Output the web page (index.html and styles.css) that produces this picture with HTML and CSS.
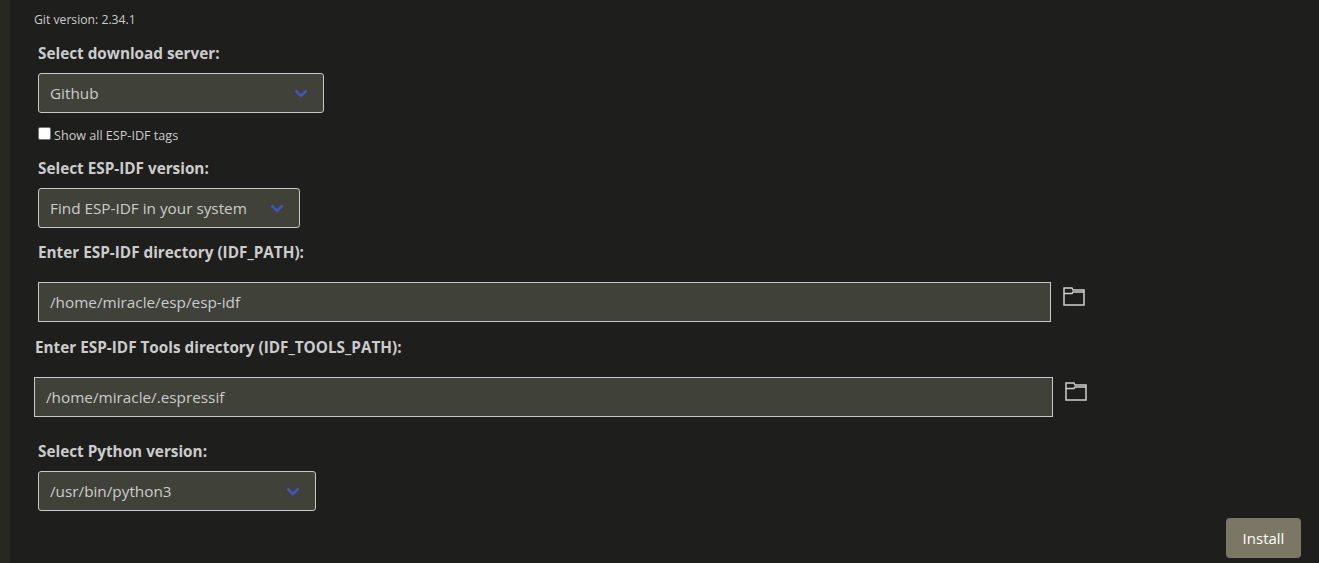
FILE: index.html
```html
<!DOCTYPE html>
<html lang="en">
<head>
  <meta charset="UTF-8" />
  <title>ESP-IDF Setup</title>
  <link rel="stylesheet" href="styles.css">
</head>
<body>
  <div class="strip"></div>
  <div class="container">
    <p class="git-version">Git version: 2.34.1</p>

    <label class="field-label label-server">Select download server:</label>
    <div class="select select-server">
      <span>Github</span>
      <svg class="chevron" viewBox="0 0 14 9"><path d="M1.500 1.500 7 7l5.500-5.500"/></svg>
    </div>

    <div class="check-row">
      <span class="check-box"></span>
      <span class="check-text">Show all ESP-IDF tags</span>
    </div>

    <label class="field-label label-version">Select ESP-IDF version:</label>
    <div class="select select-version">
      <span>Find ESP-IDF in your system</span>
      <svg class="chevron" viewBox="0 0 14 9"><path d="M1.500 1.500 7 7l5.500-5.500"/></svg>
    </div>

    <label class="field-label label-path">Enter ESP-IDF directory (IDF_PATH):</label>
    <div class="path-row path-idf">
      <div class="text-input">/home/miracle/esp/esp-idf</div>
      <svg class="folder" viewBox="0 0 22 19"><path d="M1 6.500V1h8l1 2h11v15H1V6.500h8L10 5h11"/></svg>
    </div>

    <label class="field-label label-tools">Enter ESP-IDF Tools directory (IDF_TOOLS_PATH):</label>
    <div class="path-row path-tools">
      <div class="text-input">/home/miracle/.espressif</div>
      <svg class="folder" viewBox="0 0 22 19"><path d="M1 6.500V1h8l1 2h11v15H1V6.500h8L10 5h11"/></svg>
    </div>

    <label class="field-label label-python">Select Python version:</label>
    <div class="select select-python">
      <span>/usr/bin/python3</span>
      <svg class="chevron" viewBox="0 0 14 9"><path d="M1.500 1.500 7 7l5.500-5.500"/></svg>
    </div>

    <div class="actions">
      <button type="button">Install</button>
    </div>
  </div>
</body>
</html>
```

FILE: styles.css
```css
* {
  box-sizing: border-box;
}

html, body {
  margin: 0;
  height: 563px;
  overflow: hidden;
}

body {
  display: flex;
  background-color: #1e1e1c;
  color: #cccccc;
  font-family: "Open Sans", "Noto Sans", sans-serif;
  font-size: 15.3px;
}

.strip {
  width: 10px;
  background-color: #272822;
}

.container {
  flex: 1;
  padding: 0 18px 0 28px;
}

.git-version {
  margin: 0 0 0 -4px;
  padding-top: 12px;
  height: 36px;
  font-size: 12.2px;
  line-height: 16px;
}

.field-label {
  display: block;
  height: 20px;
  line-height: 20px;
  font-size: 15.3px;
  font-weight: 700;
}

.select {
  display: flex;
  justify-content: space-between;
  align-items: center;
  height: 40px;
  margin-top: 10px;
  padding: 0 15px 0 11px;
  background-color: #404138;
  border: 1px solid #c8c8c8;
  border-radius: 3px;
}

.select-server { width: 286px; }
.select-version { width: 262px; }
.select-python { width: 278px; }

.chevron {
  width: 14px;
  height: 9px;
  fill: none;
  stroke: #4055c4;
  stroke-width: 2.5;
}

.check-row {
  display: flex;
  align-items: flex-start;
  height: 16px;
  margin-top: 14px;
  font-size: 12.6px;
  line-height: 16px;
}

.check-box {
  width: 13px;
  height: 13px;
  margin-right: 3px;
  background: #fff;
  border: 1px solid #767676;
  border-radius: 2px;
}

.check-text {
  padding-top: 1px;
}

.path-row {
  display: flex;
  align-items: flex-start;
  margin-top: 20px;
}

.text-input {
  height: 40px;
  line-height: 38px;
  padding-left: 11px;
  background-color: #404138;
  border: 1px solid #c8c8c8;
}

.path-idf .text-input { width: 1013px; }
.path-tools { margin-left: -4px; }
.path-tools .text-input { width: 1019px; }

.folder {
  width: 22px;
  height: 19px;
  margin: 5px 0 0 12px;
  fill: none;
  stroke: #cfcfcf;
  stroke-width: 1.5;
}

.label-server { margin-top: 7px; }
.label-version { margin-top: 15px; }
.label-path { margin-top: 14px; }
.label-tools { margin-top: 15px; margin-left: -3px; }
.label-python { margin-top: 24px; }

.actions {
  display: flex;
  justify-content: flex-end;
  margin-top: 7px;
}

button {
  width: 75px;
  height: 40px;
  background-color: #7b7765;
  color: #fff;
  border: none;
  border-radius: 4px;
  font-family: inherit;
  font-size: 15px;
}
```
